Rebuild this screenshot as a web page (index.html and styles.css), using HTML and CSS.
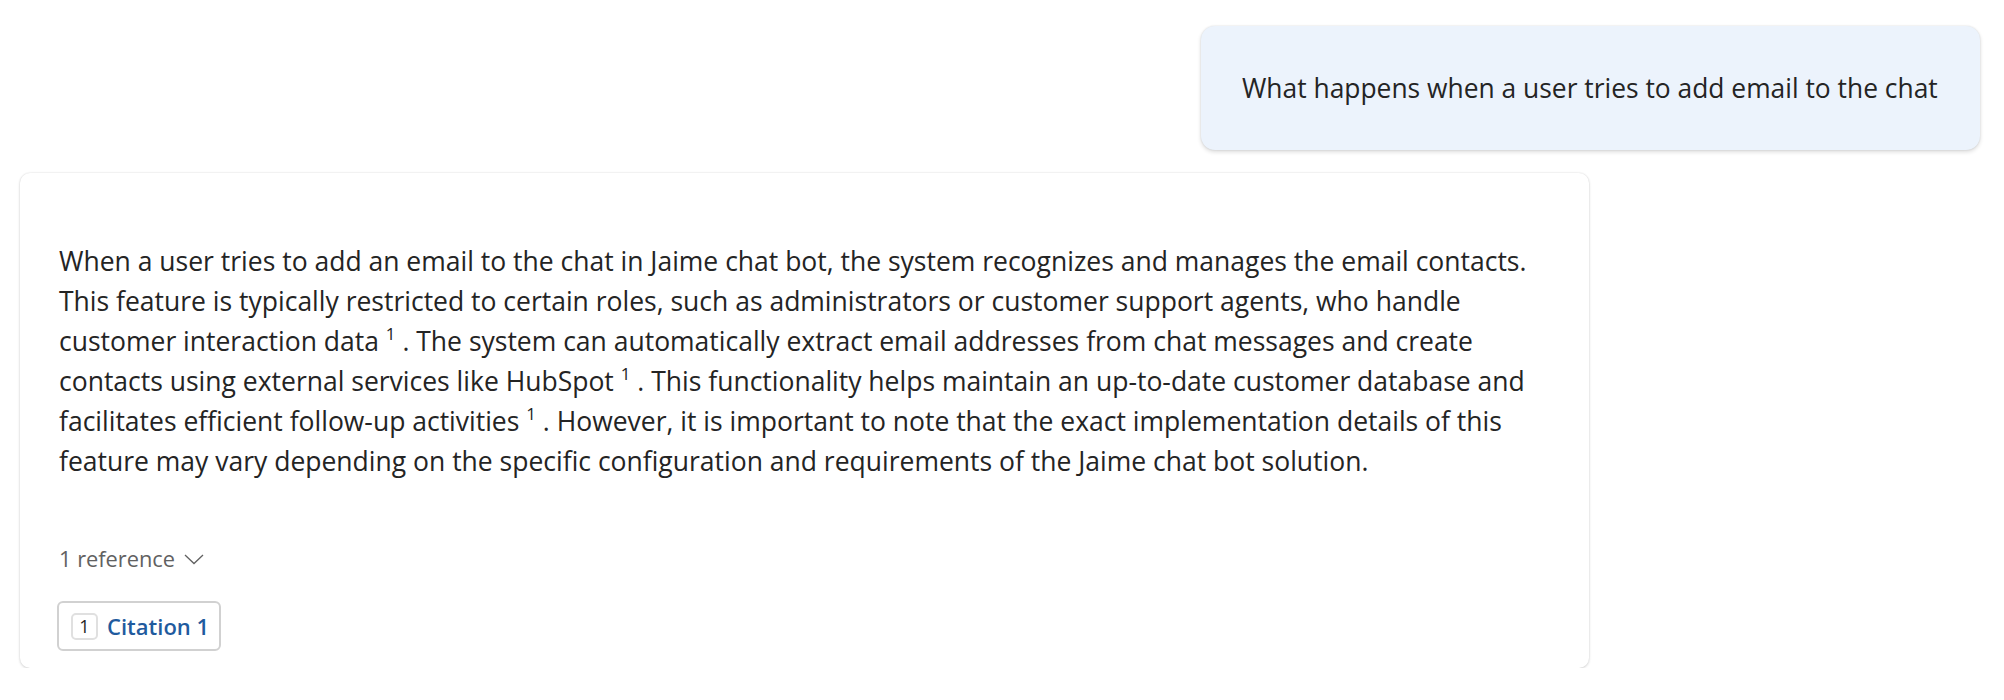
FILE: index.html
```html
<!DOCTYPE html>
<html>
<head>
<meta charset="utf-8">
<link rel="stylesheet" href="styles.css">
</head>
<body>
<div class="chat">
  <div class="row-user">
    <div class="user-bubble">What happens when a user tries to add email to the chat</div>
  </div>
  <div class="bot-card">
    <div class="bot-head"></div>
    <p class="answer">
      <span class="ln">When a user tries to add an email to the chat in Jaime chat bot, the system recognizes and manages the email contacts.</span>
      <span class="ln">This feature is typically restricted to certain roles, such as administrators or customer support agents, who handle</span>
      <span class="ln">customer interaction data <sup class="cite">1</sup> . The system can automatically extract email addresses from chat messages and create</span>
      <span class="ln">contacts using external services like HubSpot <sup class="cite">1</sup> . This functionality helps maintain an up-to-date customer database and</span>
      <span class="ln">facilitates efficient follow-up activities <sup class="cite">1</sup> . However, it is important to note that the exact implementation details of this</span>
      <span class="ln">feature may vary depending on the specific configuration and requirements of the Jaime chat bot solution.</span>
    </p>
    <div class="refs">
      <span>1 reference</span>
      <svg class="chev" width="20" height="11" viewBox="0 0 20 11"><polyline points="1,1 10,9.5 19,1" fill="none" stroke="#616161" stroke-width="1.3"/></svg>
    </div>
    <div class="citations">
      <button class="citation"><span class="num">1</span><span class="ctext">Citation 1</span></button>
    </div>
  </div>
</div>
</body>
</html>
```

FILE: styles.css
```css
html, body {
  margin: 0;
  padding: 0;
  background: #ffffff;
}
body {
  font-family: "Open Sans", "Noto Sans", sans-serif;
  color: #242424;
}
.chat {
  padding: 26px 24px 0 20px;
  display: flex;
  flex-direction: column;
  gap: 23px;
}
.row-user {
  display: flex;
  justify-content: flex-end;
}
.user-bubble {
  width: 779px;
  height: 124px;
  box-sizing: border-box;
  background: #ecf3fc;
  border-radius: 14px;
  box-shadow: 0 2px 4px rgba(0,0,0,0.14), 0 0 2px rgba(0,0,0,0.12);
  display: flex;
  align-items: center;
  padding: 0 30px 0 41px;
  font-size: 26.4px;
  white-space: nowrap;
  color: #242424;
}
.bot-card {
  width: 1569px;
  box-sizing: border-box;
  background: #ffffff;
  border-radius: 10px;
  box-shadow: 0 1px 3px rgba(0,0,0,0.14), 0 0 2px rgba(0,0,0,0.12);
  padding: 0 38px 17px 39px;
}
.bot-head {
  height: 68px;
}
.answer {
  margin: 0;
  font-size: 26.5px;
  line-height: 40px;
  color: #242424;
}
.ln {
  display: block;
  white-space: nowrap;
}
.cite {
  font-size: 17px;
  line-height: 0;
  vertical-align: 11px;
}
.refs {
  margin-top: 59px;
  height: 36px;
  display: flex;
  align-items: center;
  gap: 9px;
  font-size: 21.8px;
  color: #616161;
}
.chev {
  margin-top: 3px;
}
.citations {
  margin-top: 25px;
  display: flex;
}
.citation {
  margin-left: -2px;
  width: 164px;
  height: 50px;
  box-sizing: border-box;
  border: 2px solid #d1d1d1;
  border-radius: 6px;
  background: #ffffff;
  display: flex;
  align-items: center;
  padding: 0 0 0 12px;
  gap: 9px;
  font-family: "Open Sans", "Noto Sans", sans-serif;
  cursor: pointer;
}
.num {
  width: 27px;
  height: 27px;
  box-sizing: border-box;
  border: 2px solid #e0e0e0;
  border-radius: 5px;
  display: flex;
  align-items: center;
  justify-content: center;
  font-size: 18px;
  color: #242424;
}
.ctext {
  font-size: 22px;
  font-weight: 600;
  color: #1f5b9e;
  white-space: nowrap;
}
```
